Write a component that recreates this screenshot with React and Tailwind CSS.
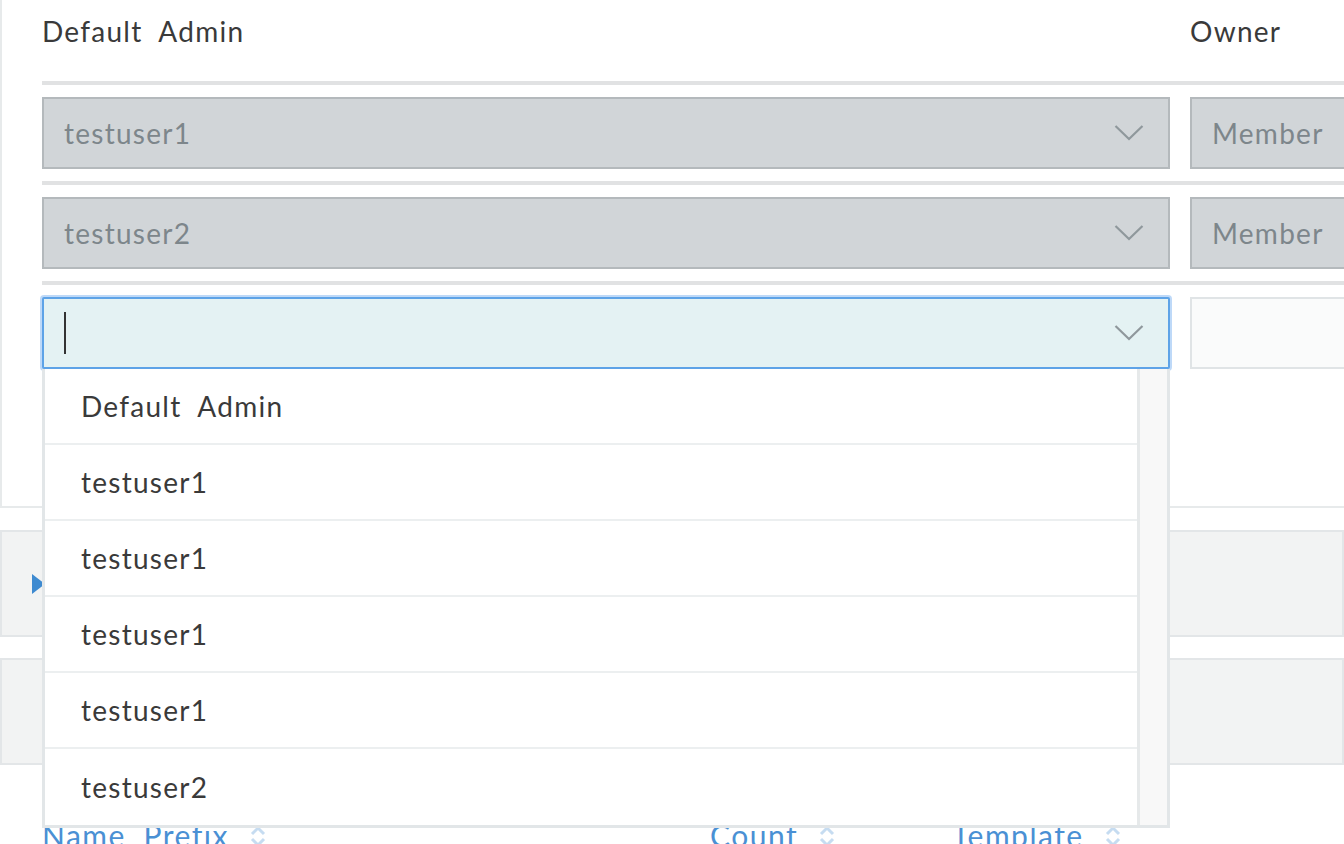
const users = ['Default Admin', 'testuser1', 'testuser1', 'testuser1', 'testuser1', 'testuser2'];

const Chevron = () => (
    <svg width="30" height="18" viewBox="0 0 30 18" fill="none" className="shrink-0">
        <path d="M1.5 2 L15 15 L28.5 2" stroke="#8f989c" strokeWidth="2.2" />
    </svg>
);

const SortIcon = () => (
    <svg width="20" height="24" viewBox="0 0 20 24" fill="none" className="ml-[19px] mt-[8px] shrink-0">
        <path d="M4 9 L10 3 L16 9" stroke="#c6dcf1" strokeWidth="3" />
        <path d="M4 14 L10 20 L16 14" stroke="#c6dcf1" strokeWidth="3" />
    </svg>
);

const Line = () => <div className="col-span-2 h-[4px] bg-[#e1e2e3]" />;

const MemberRow = ({ name }) => (
    <>
        <Line />
        <div className="my-[12px] flex h-[72px] items-center justify-between border-2 border-[#b4b9bc] bg-[#d1d5d8] pl-[20px] pr-[24px]">
            <span className="text-[#7d868b]">{name}</span>
            <Chevron />
        </div>
        <div className="my-[12px] flex h-[72px] items-center border-2 border-[#b4b9bc] bg-[#d1d5d8] pl-[20px]">
            <span className="text-[#7d868b]">Member</span>
        </div>
    </>
);

const App = () => {
    return (
        <div className="relative h-[844px] w-[1344px] overflow-hidden bg-white font-['Lato',sans-serif] text-[28px] leading-[36px] tracking-[0.045em] text-[#3a3a3a] [word-spacing:0.3em]">
            {/* member table panel */}
            <div className="h-[508px] border-b-2 border-l-2 border-[#e7eaeb] pl-[40px]">
                <div className="grid grid-cols-[1128px_200px] gap-x-[20px]">
                    <div className="h-[81px] pt-[13px]">Default Admin</div>
                    <div className="h-[81px] pt-[13px]">Owner</div>

                    <MemberRow name="testuser1" />
                    <MemberRow name="testuser2" />

                    <Line />
                    <div className="my-[12px] flex h-[72px] items-center justify-between rounded-[2px] border-2 border-[#5ea3e7] bg-[#e4f2f3] pl-[20px] pr-[24px] shadow-[0_0_0_2px_rgba(110,170,240,0.45)]">
                        <div className="h-[42px] w-[2px] bg-[#333]" />
                        <Chevron />
                    </div>
                    <div className="my-[12px] h-[72px] border-2 border-[#e0e4e6] bg-[#fafbfb]" />
                </div>
            </div>

            {/* collapsed section */}
            <div className="mt-[22px] flex h-[107px] items-center border-2 border-[#e3e6e8] bg-[#f2f3f3] pl-[30px]">
                <svg width="13" height="20" viewBox="0 0 13 20">
                    <polygon points="0,0 13,10 0,20" fill="#3e8ad0" />
                </svg>
            </div>
            <div className="mt-[21px] h-[107px] border-2 border-[#e3e6e8] bg-[#f2f3f3]" />

            {/* table header */}
            <div className="mt-[52px] flex pl-[42px] text-[30px] tracking-[0.05em] text-[#4a90d4]">
                <div className="flex w-[668px] items-start">
                    <span>Name Prefix</span>
                    <SortIcon />
                </div>
                <div className="flex w-[242px] items-start">
                    <span>Count</span>
                    <SortIcon />
                </div>
                <div className="flex items-start">
                    <span>Template</span>
                    <SortIcon />
                </div>
            </div>

            {/* open user dropdown */}
            <div className="absolute left-[42px] top-[369px] flex w-[1128px] border-x-[3px] border-b-[3px] border-[#e2e6e8] bg-white">
                <ul className="flex-1 border-r-[3px] border-[#e6e9ea]">
                    {users.map((u, i) => (
                        <li
                            key={i}
                            className={`flex h-[76px] items-center pl-[36px] ${i < users.length - 1 ? 'border-b-2 border-[#eceff0]' : ''}`}
                        >
                            {u}
                        </li>
                    ))}
                </ul>
                <div className="w-[27px] bg-[#f8f8f8]" />
            </div>
        </div>
    );
};

export default App;
